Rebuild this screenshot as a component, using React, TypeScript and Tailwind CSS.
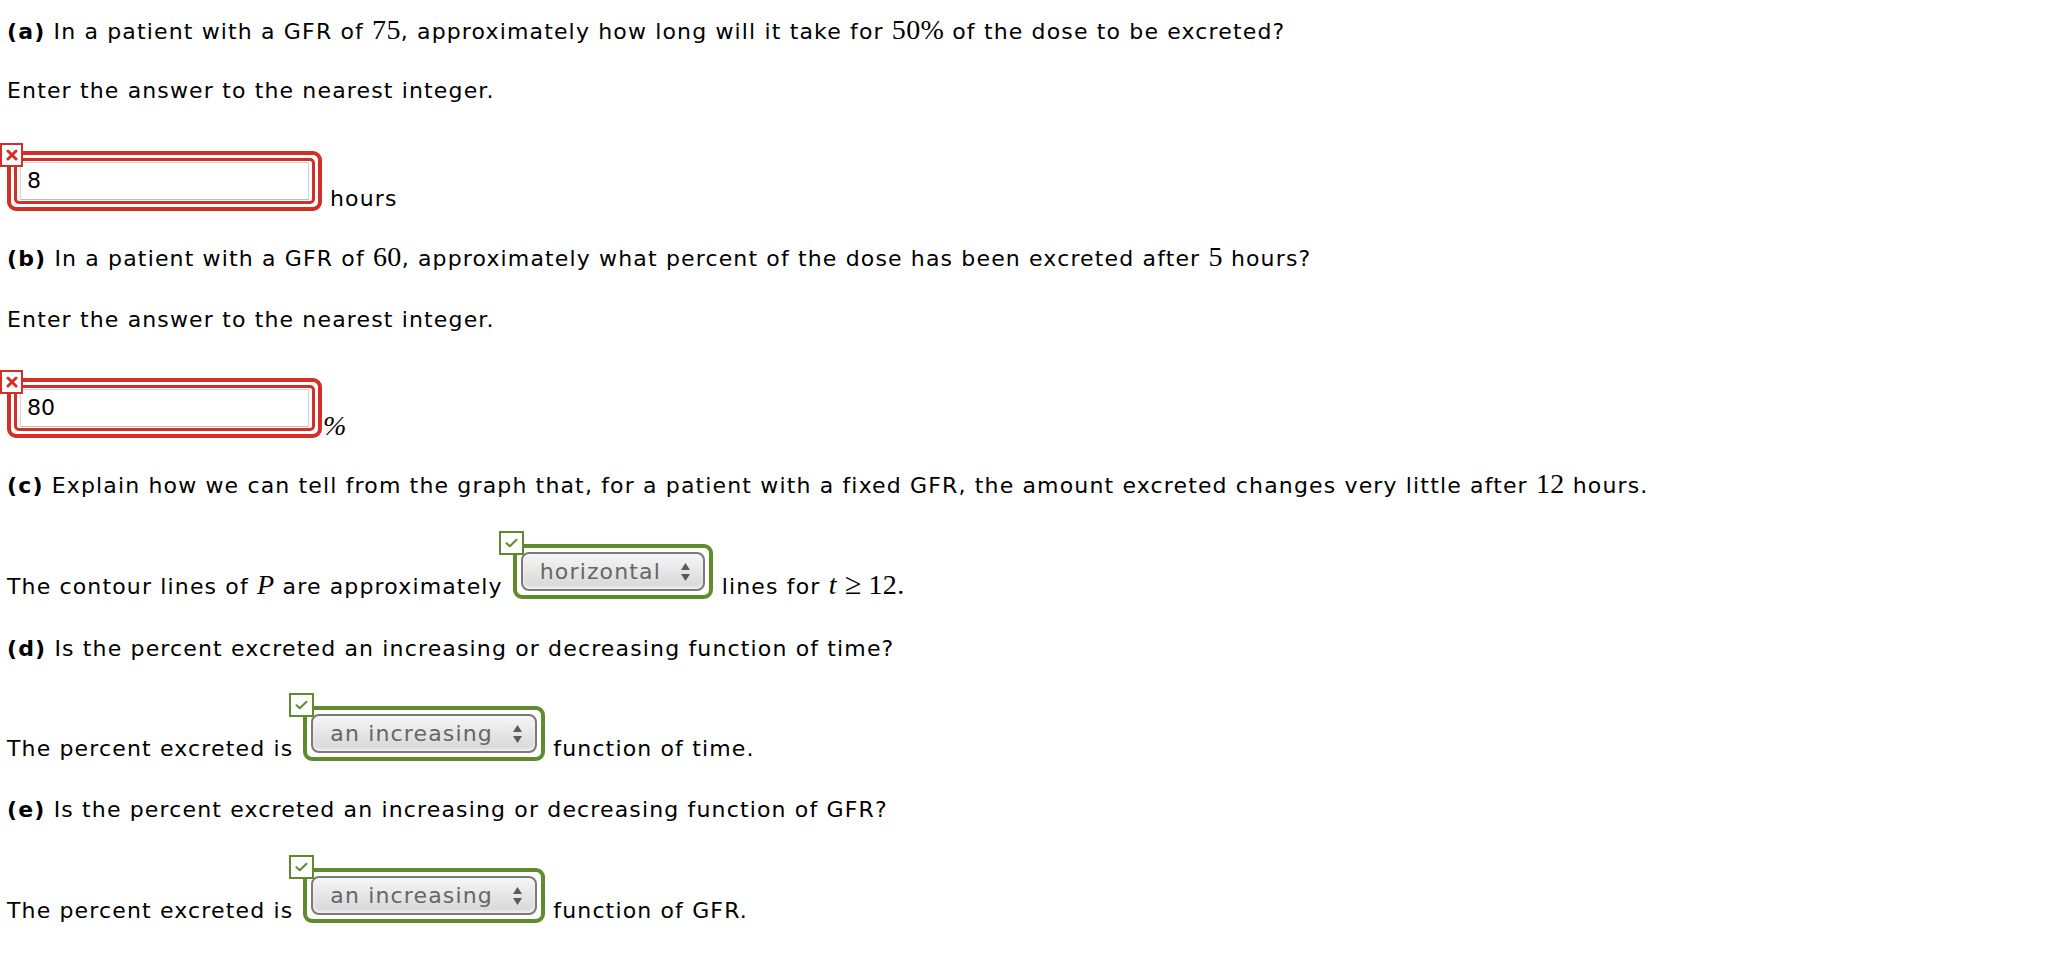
import React from "react";

const RED = "#d22f27";
const GREEN = "#5f8b2c";

function M({ children, italic }: { children: React.ReactNode; italic?: boolean }) {
  return (
    <span
      className={
        "font-['Liberation_Serif',serif] text-[28px] leading-[20px] tracking-[0.3px] " + (italic ? "italic" : "")
      }
    >
      {children}
    </span>
  );
}

function XBadge() {
  return (
    <div className="absolute left-[-7px] top-[-8px] z-10 flex h-[24px] w-[23px] items-center justify-center border-2 border-[#d22f27] bg-white">
      <svg width="12" height="12" viewBox="0 0 12 12">
        <path d="M2 2 L10 10 M10 2 L2 10" stroke={RED} strokeWidth="3" strokeLinecap="round" />
      </svg>
    </div>
  );
}

function CheckBadge() {
  return (
    <div className="absolute left-[-14px] top-[-13px] z-10 flex h-[24px] w-[25px] items-center justify-center border-2 border-[#5f8b2c] bg-white">
      <svg width="13" height="10" viewBox="0 0 13 10">
        <path d="M1.5 5.2 L4.8 8.2 L11.5 1.8" stroke={GREEN} strokeWidth="2" fill="none" strokeLinecap="round" strokeLinejoin="round" />
      </svg>
    </div>
  );
}

function WrongInput({ value }: { value: string }) {
  return (
    <div className="relative shrink-0">
      <XBadge />
      <div className="rounded-[9px] border-[4px] border-[#d22f27] bg-white p-[3px]">
        <div className="rounded-[5px] border-[3px] border-[#d22f27] bg-white px-[3px] py-[1px]">
          <div className="flex h-[38px] w-[289px] items-center border border-[#d4d4d4] border-b-[#bdbdbd] bg-white pl-[6px] text-[22px] tracking-normal text-black">
            {value}
          </div>
        </div>
      </div>
    </div>
  );
}

function Arrows() {
  return (
    <svg width="11" height="20" viewBox="0 0 11 20" className="shrink-0">
      <path d="M5.5 1 L10 8 L1 8 Z" fill="#5a5a5a" />
      <path d="M5.5 19 L10 12 L1 12 Z" fill="#5a5a5a" />
    </svg>
  );
}

function RightSelect({ value, width }: { value: string; width: number }) {
  return (
    <div className="relative shrink-0">
      <CheckBadge />
      <div className="rounded-[9px] border-[4px] border-[#5f8b2c] bg-white p-[4px]">
        <div
          className="flex h-[39px] items-center justify-between rounded-[8px] border-2 border-[#7a7a7a] bg-gradient-to-b from-[#f6f6f6] via-[#e6e6e6] to-[#d6d6d6] pl-[17px] pr-[12px] text-[22px] text-[#666666] shadow-[inset_0_-2px_3px_rgba(255,255,255,0.7)]"
          style={{ width }}
        >
          <span className="leading-none">{value}</span>
          <Arrows />
        </div>
      </div>
    </div>
  );
}

export default function App() {
  return (
    <div className="min-h-screen w-full bg-white pl-[7px] pt-[17px] font-['DejaVu_Sans',Verdana,sans-serif] text-[22px] leading-[30px] tracking-[1.15px] text-black">
      <div>
        <span className="font-bold">(a)</span> In a patient with a GFR of <M>75</M>, approximately how long will it take for{" "}
        <M>50%</M> of the dose to be excreted?
      </div>
      <div className="mt-[29px]">Enter the answer to the nearest integer.</div>
      <div className="mt-[45px] flex items-end">
        <WrongInput value="8" />
        <span className="ml-[8px] leading-[24px]">hours</span>
      </div>

      <div className="mt-[33px]">
        <span className="font-bold">(b)</span> In a patient with a GFR of <M>60</M>, approximately what percent of the dose has
        been excreted after <M>5</M> hours?
      </div>
      <div className="mt-[31px]">Enter the answer to the nearest integer.</div>
      <div className="mt-[43px] flex items-end">
        <WrongInput value="80" />
        <span className="ml-[1px] font-['Liberation_Serif',serif] text-[28px] italic leading-[24px] tracking-normal">%</span>
      </div>

      <div className="mt-[33px]">
        <span className="font-bold">(c)</span> Explain how we can tell from the graph that, for a patient with a fixed GFR, the
        amount excreted changes very little after <M>12</M> hours.
      </div>
      <div className="mt-[43px] flex items-end">
        <span className="mr-[10px] leading-[24px]">
          The contour lines of <M italic>P</M> are approximately
        </span>
        <RightSelect value="horizontal" width={184} />
        <span className="ml-[9px] leading-[24px]">
          lines for <M italic>t</M>{" "}
          <span className="mr-[6px] inline-block font-['Liberation_Serif',serif] text-[30px] leading-[20px]">≥</span>
          <M>12.</M>
        </span>
      </div>

      <div className="mt-[35px]">
        <span className="font-bold">(d)</span> Is the percent excreted an increasing or decreasing function of time?
      </div>
      <div className="mt-[42px] flex items-end">
        <span className="mr-[10px] leading-[24px]">The percent excreted is</span>
        <RightSelect value="an increasing" width={226} />
        <span className="ml-[8px] leading-[24px]">function of time.</span>
      </div>

      <div className="mt-[34px]">
        <span className="font-bold">(e)</span> Is the percent excreted an increasing or decreasing function of GFR?
      </div>
      <div className="mt-[43px] flex items-end">
        <span className="mr-[10px] leading-[24px]">The percent excreted is</span>
        <RightSelect value="an increasing" width={226} />
        <span className="ml-[8px] leading-[24px]">function of GFR.</span>
      </div>
    </div>
  );
}
